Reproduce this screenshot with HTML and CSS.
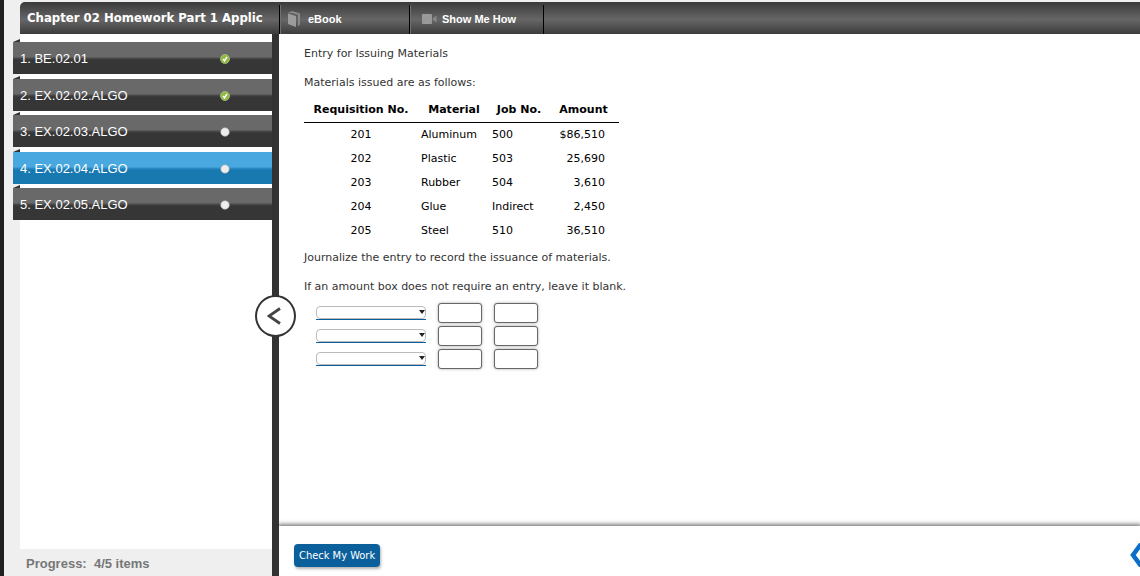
FILE: index.html
```html
<!DOCTYPE html>
<html lang="en">
<head>
  <meta charset="UTF-8">
  <meta name="viewport" content="width=device-width, initial-scale=1.0">
  <title>Chapter 02 Homework</title>
  <link rel="stylesheet" href="styles.css">
</head>
<body>
  <header class="topbar">
    <h1 class="title">Chapter 02 Homework Part 1 Applic</h1>
    <button type="button" class="tool tool-ebook">
      <svg width="12" height="16" viewBox="0 0 12 16" aria-hidden="true">
        <path d="M0 2.500 8 5v11L0 13z" fill="#9c9c9c"/>
        <path d="M0 2 4 0l8 2.500v11L10 15V4L3 1.800 2 2.500z" fill="#8a8a8a"/>
      </svg>
      eBook
    </button>
    <button type="button" class="tool tool-video">
      <svg width="15" height="10" viewBox="0 0 15 10" aria-hidden="true">
        <rect width="10" height="10" rx="1" fill="#999"/>
        <path d="M11 4 14.500 1.500v7L11 6z" fill="#858585"/>
      </svg>
      Show Me How
    </button>
  </header>

  <div class="main">
    <nav class="sidebar">
      <ol class="items">
        <li><a href="#" class="item">1. BE.02.01
          <svg class="status" width="10" height="10" viewBox="0 0 10 10"><circle cx="5" cy="5" r="4.500" fill="#8dba3c" stroke="#b9c79a" stroke-width=".7"/><path d="M3 5 4.500 7 7 2.800" fill="none" stroke="#fff" stroke-width="1.500"/></svg>
        </a></li>
        <li><a href="#" class="item">2. EX.02.02.ALGO
          <svg class="status" width="10" height="10" viewBox="0 0 10 10"><circle cx="5" cy="5" r="4.500" fill="#8dba3c" stroke="#b9c79a" stroke-width=".7"/><path d="M3 5 4.500 7 7 2.800" fill="none" stroke="#fff" stroke-width="1.500"/></svg>
        </a></li>
        <li><a href="#" class="item">3. EX.02.03.ALGO
          <svg class="status" width="10" height="10" viewBox="0 0 10 10"><circle cx="5" cy="5" r="4.300" fill="#ededed" stroke="#aaa" stroke-width=".6"/></svg>
        </a></li>
        <li><a href="#" class="item active">4. EX.02.04.ALGO
          <svg class="status" width="10" height="10" viewBox="0 0 10 10"><circle cx="5" cy="5" r="4.300" fill="#ededed" stroke="#999" stroke-width=".6"/></svg>
        </a></li>
        <li><a href="#" class="item">5. EX.02.05.ALGO
          <svg class="status" width="10" height="10" viewBox="0 0 10 10"><circle cx="5" cy="5" r="4.300" fill="#ededed" stroke="#aaa" stroke-width=".6"/></svg>
        </a></li>
      </ol>
      <div class="progress">Progress:&nbsp; 4/5 items</div>
    </nav>

    <div class="splitter">
      <button type="button" class="collapse" aria-label="Collapse">
        <svg width="14" height="18" viewBox="0 0 14 18"><path d="M13 1.500 2 9l11 7.500" fill="none" stroke="#444" stroke-width="2.800"/></svg>
      </button>
    </div>

    <div class="content">
      <div class="question">
        <p>Entry for Issuing Materials</p>
        <p>Materials issued are as follows:</p>

        <table class="materials">
          <thead>
            <tr><th class="req">Requisition No.</th><th class="mat">Material</th><th class="job">Job No.</th><th class="amt">Amount</th></tr>
          </thead>
          <tbody>
            <tr><td class="req">201</td><td class="mat">Aluminum</td><td class="job">500</td><td class="amt">$86,510</td></tr>
            <tr><td class="req">202</td><td class="mat">Plastic</td><td class="job">503</td><td class="amt">25,690</td></tr>
            <tr><td class="req">203</td><td class="mat">Rubber</td><td class="job">504</td><td class="amt">3,610</td></tr>
            <tr><td class="req">204</td><td class="mat">Glue</td><td class="job">Indirect</td><td class="amt">2,450</td></tr>
            <tr><td class="req">205</td><td class="mat">Steel</td><td class="job">510</td><td class="amt">36,510</td></tr>
          </tbody>
        </table>

        <p>Journalize the entry to record the issuance of materials.</p>
        <p>If an amount box does not require an entry, leave it blank.</p>

        <form class="journal">
          <span class="pick"><select aria-label="Account 1"><option></option></select></span>
          <input type="text" aria-label="Debit 1">
          <input type="text" aria-label="Credit 1">
          <span class="pick"><select aria-label="Account 2"><option></option></select></span>
          <input type="text" aria-label="Debit 2">
          <input type="text" aria-label="Credit 2">
          <span class="pick"><select aria-label="Account 3"><option></option></select></span>
          <input type="text" aria-label="Debit 3">
          <input type="text" aria-label="Credit 3">
        </form>
      </div>

      <footer class="footer">
        <button type="button" class="check">Check My Work</button>
        <button type="button" class="prev" aria-label="Previous">
          <svg width="10" height="24" viewBox="0 0 10 24"><path d="M11 1 3 12l8 11" fill="none" stroke="#0b6fc7" stroke-width="4.500"/></svg>
        </button>
      </footer>
    </div>
  </div>
</body>
</html>
```

FILE: styles.css
```css
* {
  box-sizing: border-box;
}
body {
  margin: 0;
  height: 100vh;
  padding-top: 2px;
  border-left: 4px solid #221f1f;
  background: #efefef;
  display: flex;
  flex-direction: column;
  overflow: hidden;
  font-family: Verdana, "DejaVu Sans", sans-serif;
  font-size: 11px;
  color: #333;
}
button {
  border: none;
  background: none;
  padding: 0;
  cursor: pointer;
}

/* top bar */
.topbar {
  display: flex;
  flex: none;
  height: 32px;
  margin-left: 16px;
  padding-top: 3px;
  border-top-left-radius: 5px;
  background: linear-gradient(#3a3a3a, #666 55%, #3c3c3c);
}
.title {
  width: 259px;
  margin: 0;
  padding-left: 7px;
  font: bold 13px/25px "DejaVu Sans Condensed", "Open Sans", sans-serif;
  color: #fff;
  white-space: nowrap;
  overflow: hidden;
}
.tool {
  display: flex;
  align-items: center;
  gap: 8px;
  padding-bottom: 2px;
  border-left: 1px solid #000;
  box-shadow: inset 1px 0 #707070;
  font: bold 11px "Liberation Sans", Arial, sans-serif;
  color: #fff;
}
.tool-ebook {
  width: 130px;
  padding-left: 8px;
}
.tool-video {
  width: 135px;
  padding-left: 12px;
  gap: 5px;
  border-right: 1px solid #000;
}

/* sidebar */
.main {
  display: flex;
  flex: 1;
  min-height: 0;
}
.sidebar {
  display: flex;
  flex-direction: column;
  width: 268px;
  flex: none;
  padding-left: 9px;
}
.items {
  flex: 1;
  margin: 0;
  padding: 8px 0 0;
  list-style: none;
  background: linear-gradient(to right, #efefef 7px, #fff 7px);
}
.items li {
  position: relative;
  margin-bottom: 4px;
}
.items li:nth-child(odd) {
  margin-bottom: 5px;
}
.items li::before {
  content: "";
  position: absolute;
  left: 0;
  top: -3px;
  width: 7px;
  height: 3px;
  background: #333;
  clip-path: polygon(0 100%, 100% 0, 100% 100%);
}
.item {
  display: flex;
  align-items: center;
  justify-content: space-between;
  height: 32px;
  padding: 1px 42px 0 7px;
  background: linear-gradient(#696969 15px, #4c4c4c 16px, #363636 18px);
  font: 13px "Liberation Sans", Arial, sans-serif;
  color: #fff;
  text-decoration: none;
}
.item.active {
  background: linear-gradient(#49a8e0 15px, #2f8fcb 16px, #1878b0 18px);
}
.progress {
  height: 27px;
  padding-left: 13px;
  font: bold 13px/29px "Liberation Sans", Arial, sans-serif;
  color: #777;
}
.splitter {
  position: relative;
  flex: none;
  width: 7px;
  background: #333;
}
.collapse {
  position: absolute;
  z-index: 1;
  left: -17px;
  top: 261px;
  display: flex;
  align-items: center;
  justify-content: center;
  width: 41px;
  height: 42px;
  padding-right: 3px;
  border: 2px solid #333;
  border-radius: 50%;
  background: #fff;
}

/* question */
.content {
  display: flex;
  flex: 1;
  flex-direction: column;
  min-width: 0;
  background: #fff;
}
.question {
  flex: 1;
  padding: 12px 25px 0;
}
.question p {
  margin: 0 0 13px;
  line-height: 16px;
}
.materials {
  margin: -8px 0 8px;
  border-collapse: collapse;
  table-layout: fixed;
  width: 315px;
  color: #000;
}
.materials th {
  height: 26px;
  padding: 1px 0 0;
  border-bottom: 1px solid #000;
  text-align: center;
}
.materials td {
  height: 24px;
  padding: 1px 0 0;
}
.materials .req {
  width: 114px;
  text-align: center;
}
.materials .mat {
  width: 72px;
}
.materials .job {
  width: 58px;
}
.materials td.mat {
  padding-left: 3px;
}
.materials td.job {
  padding-left: 2px;
}
.materials td.amt {
  padding-right: 14px;
  text-align: right;
}
.journal {
  display: grid;
  grid-template-columns: 110px 44px 44px;
  gap: 3px 12px;
  align-items: center;
  margin: -5px 0 0 12px;
}
.journal input {
  width: 100%;
  height: 20px;
  padding: 0 4px;
  border: 1px solid #666;
  border-radius: 3px;
  box-shadow: 0 0 3px rgba(0,0,0,0.35);
  background: #fff;
}
.pick {
  position: relative;
  display: flex;
  border-bottom: 1px solid #0b5f9e;
}
.pick select {
  appearance: none;
  width: 100%;
  height: 13px;
  padding: 0 10px 0 4px;
  border: 1px solid #bbb;
  border-radius: 4px;
  background: #fff;
  font-size: 9px;
}
.pick::after {
  content: "";
  position: absolute;
  right: 1px;
  top: 4px;
  border: 3px solid transparent;
  border-top: 4px solid #222;
  border-bottom: none;
  pointer-events: none;
}

/* footer */
.footer {
  display: flex;
  flex: none;
  align-items: center;
  justify-content: space-between;
  height: 50px;
  padding: 8px 0 0 15px;
  background: #fff;
  box-shadow: 0 -1px 4px 1px rgba(0,0,0,0.5);
}
.check {
  height: 23px;
  padding: 0 5px;
  border-radius: 4px;
  background: #0b5f9b;
  box-shadow: 1px 2px 3px rgba(0,0,0,0.3);
  font: 11px "DejaVu Sans Condensed", "Open Sans", sans-serif;
  color: #fff;
}
.prev {
  display: flex;
}
```
